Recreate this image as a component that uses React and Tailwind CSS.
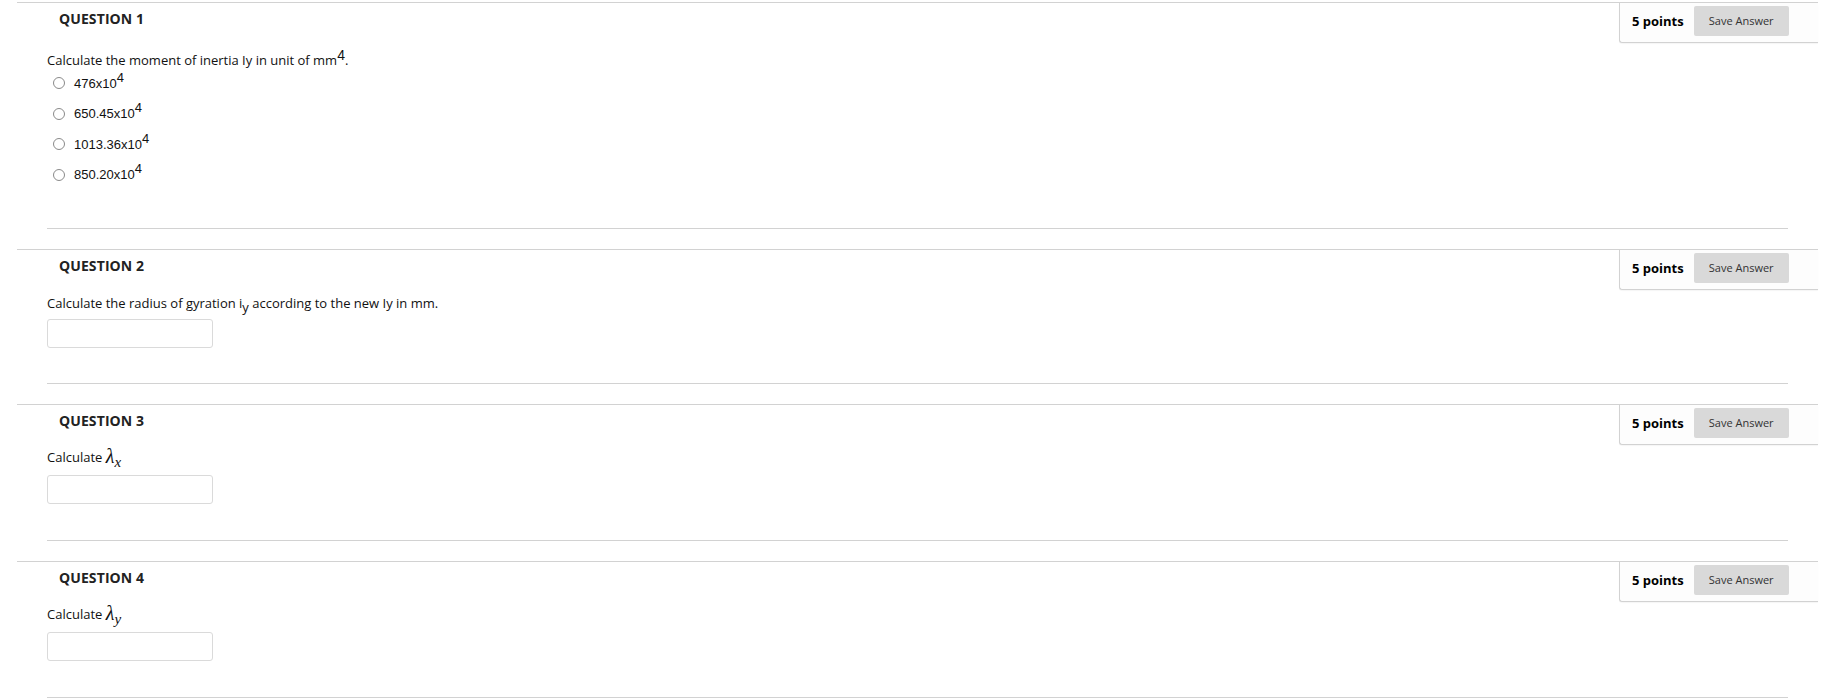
import React from 'react';

const font = { fontFamily: '"Open Sans", "Liberation Sans", sans-serif' };

function Radio({ children }) {
    return (
        <label className="flex items-center h-[30.5px] pl-[6px] gap-[9px]">
            <span className="w-[12px] h-[12px] rounded-full border border-[#8a8a8a] bg-white shrink-0" />
            <span className="text-[13px] text-[#111] font-['Liberation_Sans',Arial,sans-serif]">{children}</span>
        </label>
    );
}

function Exp({ base }) {
    return (
        <>
            {base}x10<span className="relative -top-[6px] text-[13px]">4</span>
        </>
    );
}

function Question({ num, children }) {
    return (
        <section className="border-t border-[#d2d2d2]">
            <div className="flex justify-between">
                <h2 className="pl-[42px] pt-[6px] text-[14px] leading-[20px] font-bold text-[#222] tracking-[0.1px]">
                    QUESTION {num}
                </h2>
                <div className="w-[199px] h-[40px] border-l border-b border-[#d2d2d2] rounded-bl-[3px] bg-[#fdfdfd] shadow-[0_1px_1px_rgba(0,0,0,0.04)] flex items-start pt-[3px] pl-[12px]">
                    <span className="text-[13px] leading-[30px] font-bold text-black">5 points</span>
                    <button className="ml-[10px] w-[95px] h-[30px] bg-[#d9d9d9] rounded-[2px] text-[11px] text-[#333]">
                        Save Answer
                    </button>
                </div>
            </div>
            <div className="mx-[30px] border-b border-[#d2d2d2]">{children}</div>
        </section>
    );
}

function Input() {
    return <div className="w-[166px] h-[29px] border border-[#dadada] rounded-[3px] bg-white" />;
}

function Lambda({ sub }) {
    return (
        <span className="font-['Liberation_Serif',serif] italic leading-none">
            <span className="text-[20px] relative top-[1px]">λ</span>
            <span className="text-[15px] relative top-[5px]">{sub}</span>
        </span>
    );
}

export default function App() {
    return (
        <div className="bg-white min-h-[699px] pl-[17px] pr-[19px] pt-[2px] text-[#111]" style={font}>
            <div className="flex flex-col gap-[20px]">
                <Question num={1}>
                    <div className="pt-[8px] pb-[38px]">
                        <p className="text-[13px] leading-[18px]">
                            Calculate the moment of inertia Iy in unit of mm<span className="relative -top-[5px] text-[14px] font-['Liberation_Sans',Arial,sans-serif]">4</span>.
                        </p>
                        <div className="-mt-[1px]">
                            <Radio><Exp base="476" /></Radio>
                            <Radio><Exp base="650.45" /></Radio>
                            <Radio><Exp base="1013.36" /></Radio>
                            <Radio><Exp base="850.20" /></Radio>
                        </div>
                    </div>
                </Question>

                <Question num={2}>
                    <div className="pt-[4px] pb-[35px]">
                        <p className="text-[13px] leading-[18px]">
                            Calculate the radius of gyration i<span className="relative top-[4px]">y</span> according to the new Iy in mm.
                        </p>
                        <div className="mt-[7px]">
                            <Input />
                        </div>
                    </div>
                </Question>

                <Question num={3}>
                    <div className="pb-[36px]">
                        <p className="text-[13px] leading-[22px]">
                            Calculate <Lambda sub="x" />
                        </p>
                        <div className="mt-[7px]">
                            <Input />
                        </div>
                    </div>
                </Question>

                <Question num={4}>
                    <div className="pb-[36px]">
                        <p className="text-[13px] leading-[22px]">
                            Calculate <Lambda sub="y" />
                        </p>
                        <div className="mt-[7px]">
                            <Input />
                        </div>
                    </div>
                </Question>
            </div>
        </div>
    );
}
